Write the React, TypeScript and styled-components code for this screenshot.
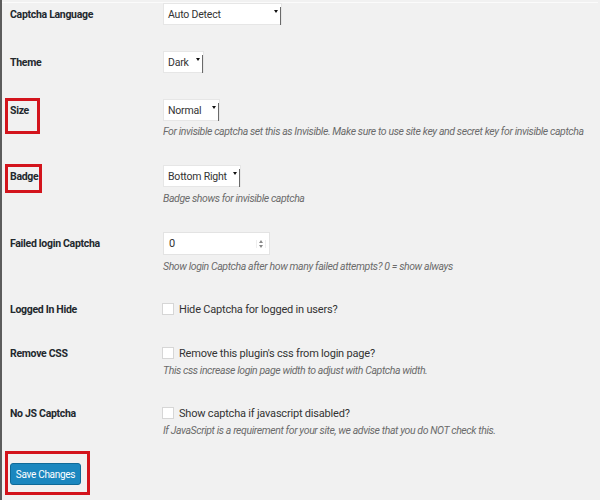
import styled, { createGlobalStyle } from "styled-components";

const GlobalStyle = createGlobalStyle`
  html, body {
    margin: 0;
    padding: 0;
    background: #f1f1f1;
  }
  body {
    font-family: "Roboto", "Noto Sans", sans-serif;
    color: #23282d;
  }
`;

const Page = styled.div`
  width: 598px;
  height: 500px;
  overflow: hidden;
  border-left: 2px solid #5c5c5c;
  background: #f1f1f1;
  padding-top: 2px;
  box-sizing: border-box;
`;

const Form = styled.div`
  border-top: 1px solid #fbfbfb;
  display: flex;
  flex-direction: column;
`;

const Row = styled.div<{ $first?: boolean }>`
  display: grid;
  grid-template-columns: 161px 1fr;
  padding: ${(p) => (p.$first ? "0 0 13px" : "13px 0")};
`;

const LabelCell = styled.div<{ $h?: number }>`
  padding-left: 8px;
  height: ${(p) => p.$h ?? 22}px;
  display: flex;
  align-items: center;
`;

const Label = styled.span`
  position: relative;
  font-size: 10.5px;
  font-weight: 700;
  color: #23282d;
  letter-spacing: -0.3px;
`;

const Marker = styled.span<{ $w: number; $h: number; $top: number }>`
  position: absolute;
  left: -5px;
  top: ${(p) => p.$top}px;
  width: ${(p) => p.$w}px;
  height: ${(p) => p.$h}px;
  border: 3px solid #d3141c;
  box-sizing: border-box;
  pointer-events: none;
`;

const FieldCell = styled.div`
  display: flex;
  flex-direction: column;
  align-items: flex-start;
`;

const Select = styled.div<{ $w: number }>`
  width: ${(p) => p.$w}px;
  height: 22px;
  box-sizing: border-box;
  background: #fff;
  border: 1px solid #e6e6e6;
  display: flex;
  align-items: center;
  justify-content: space-between;
  padding-left: 4px;
  font-size: 10.5px;
  letter-spacing: -0.2px;
  color: #333;
  white-space: nowrap;
`;

const Caret = styled.span`
  flex: none;
  width: 7px;
  height: 18px;
  margin-top: 3px;
  border-right: 1px solid #6a6a6a;
  display: flex;
  align-items: flex-start;
  justify-content: flex-start;
  padding-top: 3px;
  box-sizing: border-box;

  &::before {
    content: "";
    border-left: 2px solid transparent;
    border-right: 2px solid transparent;
    border-top: 3px solid #111;
  }
`;

const NumberBox = styled.div`
  width: 107px;
  height: 23px;
  box-sizing: border-box;
  background: #fff;
  border: 1px solid #e3e3e3;
  display: flex;
  align-items: center;
  justify-content: space-between;
  padding: 0 3px 0 5px;
  font-size: 11px;
  color: #333;
`;

const Spinner = styled.span`
  display: flex;
  flex-direction: column;
  gap: 2px;
  padding: 0 2px;
  border-left: 1px solid #eee;
  border-right: 1px solid #eee;

  &::before,
  &::after {
    content: "";
    border-left: 2px solid transparent;
    border-right: 2px solid transparent;
  }
  &::before {
    border-bottom: 3px solid #888;
  }
  &::after {
    border-top: 3px solid #888;
  }
`;

const Desc = styled.p<{ $gap: number }>`
  margin: ${(p) => p.$gap}px 0 0;
  font-size: 10.5px;
  line-height: 14px;
  font-style: italic;
  color: #6b6b6b;
  letter-spacing: -0.4px;
  white-space: nowrap;
`;

const CheckLine = styled.label`
  height: 18px;
  display: flex;
  align-items: center;
  gap: 5px;
  font-size: 11px;
  color: #333;
  letter-spacing: -0.2px;
`;

const Box = styled.span`
  width: 12px;
  height: 12px;
  margin-left: -1px;
  box-sizing: border-box;
  background: #fff;
  border: 1px solid #d6d6d6;
`;

const SubmitArea = styled.div`
  margin: 0 0 0 3px;
  padding: 9px 6px 7px 2px;
  border: 3px solid #d3141c;
  align-self: flex-start;
`;

const SaveButton = styled.button`
  width: 71px;
  height: 22px;
  padding: 0;
  border: 1px solid #0f6a98;
  border-radius: 3px;
  background: #1b87bf;
  color: #fff;
  font-family: "Roboto", "Noto Sans", sans-serif;
  font-size: 10px;
  letter-spacing: -0.3px;
  display: block;
`;

const App = () => {
  return (
    <>
      <GlobalStyle />
      <Page>
        <Form>
          <Row $first>
            <LabelCell>
              <Label>Captcha Language</Label>
            </LabelCell>
            <FieldCell>
              <Select $w={119}>
                Auto Detect
                <Caret />
              </Select>
            </FieldCell>
          </Row>

          <Row>
            <LabelCell>
              <Label>Theme</Label>
            </LabelCell>
            <FieldCell>
              <Select $w={41}>
                Dark
                <Caret />
              </Select>
            </FieldCell>
          </Row>

          <Row>
            <LabelCell>
              <Label>
                Size
                <Marker $w={35} $h={36} $top={-6} />
              </Label>
            </LabelCell>
            <FieldCell>
              <Select $w={57}>
                Normal
                <Caret />
              </Select>
              <Desc $gap={4}>
                For invisible captcha set this as Invisible. Make sure to use site key and secret key for invisible captcha
              </Desc>
            </FieldCell>
          </Row>

          <Row>
            <LabelCell>
              <Label>
                Badge
                <Marker $w={37} $h={29} $top={-6} />
              </Label>
            </LabelCell>
            <FieldCell>
              <Select $w={78}>
                Bottom Right
                <Caret />
              </Select>
              <Desc $gap={5}>Badge shows for invisible captcha</Desc>
            </FieldCell>
          </Row>

          <Row>
            <LabelCell $h={23}>
              <Label>Failed login Captcha</Label>
            </LabelCell>
            <FieldCell>
              <NumberBox>
                0
                <Spinner />
              </NumberBox>
              <Desc $gap={5}>Show login Captcha after how many failed attempts? 0 = show always</Desc>
            </FieldCell>
          </Row>

          <Row>
            <LabelCell $h={18}>
              <Label>Logged In Hide</Label>
            </LabelCell>
            <FieldCell>
              <CheckLine>
                <Box />
                Hide Captcha for logged in users?
              </CheckLine>
            </FieldCell>
          </Row>

          <Row>
            <LabelCell $h={18}>
              <Label>Remove CSS</Label>
            </LabelCell>
            <FieldCell>
              <CheckLine>
                <Box />
                Remove this plugin's css from login page?
              </CheckLine>
              <Desc $gap={2}>This css increase login page width to adjust with Captcha width.</Desc>
            </FieldCell>
          </Row>

          <Row>
            <LabelCell $h={18}>
              <Label>No JS Captcha</Label>
            </LabelCell>
            <FieldCell>
              <CheckLine>
                <Box />
                Show captcha if javascript disabled?
              </CheckLine>
              <Desc $gap={2}>
                If JavaScript is a requirement for your site, we advise that you do NOT check this.
              </Desc>
            </FieldCell>
          </Row>

          <SubmitArea>
            <SaveButton>Save Changes</SaveButton>
          </SubmitArea>
        </Form>
      </Page>
    </>
  );
};

export default App;
